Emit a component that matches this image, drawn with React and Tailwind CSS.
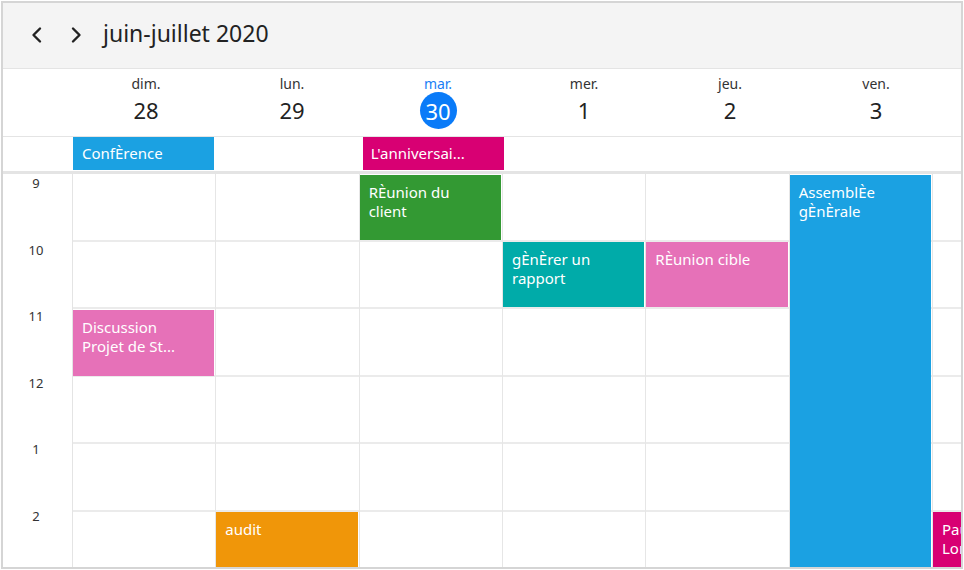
import React from "react";

const FONT = { fontFamily: '"Noto Sans", "Open Sans", sans-serif' };

const days = [
  { n: "dim.", d: "28" },
  { n: "lun.", d: "29" },
  { n: "mar.", d: "30", today: true },
  { n: "mer.", d: "1" },
  { n: "jeu.", d: "2" },
  { n: "ven.", d: "3" },
];

const hours = ["9", "10", "11", "12", "1", "2"];

const events = {
  0: [{ top: 136, h: 66, color: "bg-[#e671b8]", lines: ["Discussion", "Projet de St..."] }],
  1: [{ top: 338, h: 80, color: "bg-[#f09609]", lines: ["audit"] }],
  2: [{ top: 1, h: 65, color: "bg-[#339933]", lines: ["RÈunion du", "client"] }],
  3: [{ top: 68, h: 65, color: "bg-[#00aba9]", lines: ["gÈnÈrer un", "rapport"] }],
  4: [{ top: 68, h: 65, color: "bg-[#e671b8]", lines: ["RÈunion cible"] }],
  5: [{ top: 1, h: 420, color: "bg-[#1ba1e2]", lines: ["AssemblÈe", "gÈnÈrale"] }],
  6: [{ top: 338, h: 80, color: "bg-[#d80073]", lines: ["Pause", "Long"] }],
};

function Chevron({ dir }) {
  return (
    <svg width="14" height="18" viewBox="0 0 14 18" fill="none">
      {dir === "left" ? (
        <polyline points="10,2.5 3.5,9 10,15.5" stroke="#222" strokeWidth="2.4" strokeLinecap="round" strokeLinejoin="round" />
      ) : (
        <polyline points="4,2.5 10.5,9 4,15.5" stroke="#222" strokeWidth="2.4" strokeLinecap="round" strokeLinejoin="round" />
      )}
    </svg>
  );
}

export default function App() {
  return (
    <div className="w-[964px] h-[570px] bg-white p-px" style={FONT}>
      <div className="w-full h-full border-2 border-[#d5d5d5] flex flex-col overflow-hidden">
        {/* Toolbar */}
        <div className="h-[66px] shrink-0 bg-[#f4f4f4] border-b border-[#e4e4e4] flex items-center">
          <div className="w-[22px]" />
          <button className="w-[24px] h-[24px] flex items-center justify-center -mt-[2px]">
            <Chevron dir="left" />
          </button>
          <div className="w-[15px]" />
          <button className="w-[24px] h-[24px] flex items-center justify-center -mt-[2px]">
            <Chevron dir="right" />
          </button>
          <div className="ml-[15px] text-[23px] text-[#222] leading-none -mt-[5px]">juin-juillet 2020</div>
        </div>

        {/* Day header */}
        <div className="h-[68px] shrink-0 border-b border-[#e4e4e4] flex">
          <div className="w-[70px] shrink-0" />
          {days.map((d) => (
            <div key={d.d} className="w-[146px] shrink-0 flex flex-col items-center">
              <div className={`mt-[6px] text-[14px] leading-[18px] ${d.today ? "text-[#1a7ef5]" : "text-[#333]"}`}>{d.n}</div>
              {d.today ? (
                <div className="-mt-[1px] w-[37px] h-[37px] rounded-full bg-[#0a7bf8] text-white text-[22px] flex items-center justify-center leading-none">
                  {d.d}
                </div>
              ) : (
                <div className="-mt-[2px] h-[37px] text-[22px] text-[#222] flex items-center leading-none">{d.d}</div>
              )}
            </div>
          ))}
        </div>

        {/* All-day row */}
        <div className="h-[37px] shrink-0 border-b-[3px] border-[#e4e4e4] flex">
          <div className="w-[70px] shrink-0" />
          <div className="w-[143.33px] shrink-0 pr-[2px]">
            <div className="h-[33px] bg-[#1ba1e2] text-white text-[15px] flex items-center pl-[9px]">ConfÈrence</div>
          </div>
          <div className="w-[143.33px] shrink-0" />
          <div className="w-[143.33px] shrink-0 pl-[3px]">
            <div className="h-[33px] w-[141px] bg-[#d80073] text-white text-[15px] flex items-center pl-[8px]">L'anniversai...</div>
          </div>
        </div>

        {/* Time grid */}
        <div className="flex-1 flex overflow-hidden">
          <div className="w-[70px] shrink-0 border-r border-[#e4e4e4]">
            {hours.map((h) => (
              <div key={h} className="h-[67.5px] text-center text-[13px] text-[#333] pr-[3px] -mt-px">
                <div className="h-px" />
                {h}
              </div>
            ))}
          </div>
          {[0, 1, 2, 3, 4, 5, 6].map((c) => (
            <div key={c} className="w-[143.33px] shrink-0 border-r border-[#e6e6e6] relative">
              {hours.map((h) => (
                <div key={h} className="h-[67.5px] border-b-2 border-[#ebebeb]" />
              ))}
              {(events[c] || []).map((e, i) => (
                <div
                  key={i}
                  className={`absolute left-0 right-[1px] ${e.color} text-white text-[15px] leading-[19px] pl-[9px] pt-[8px] overflow-hidden whitespace-nowrap`}
                  style={{ top: e.top, height: e.h }}
                >
                  {e.lines.map((l) => (
                    <div key={l}>{l}</div>
                  ))}
                </div>
              ))}
            </div>
          ))}
        </div>
      </div>
    </div>
  );
}
